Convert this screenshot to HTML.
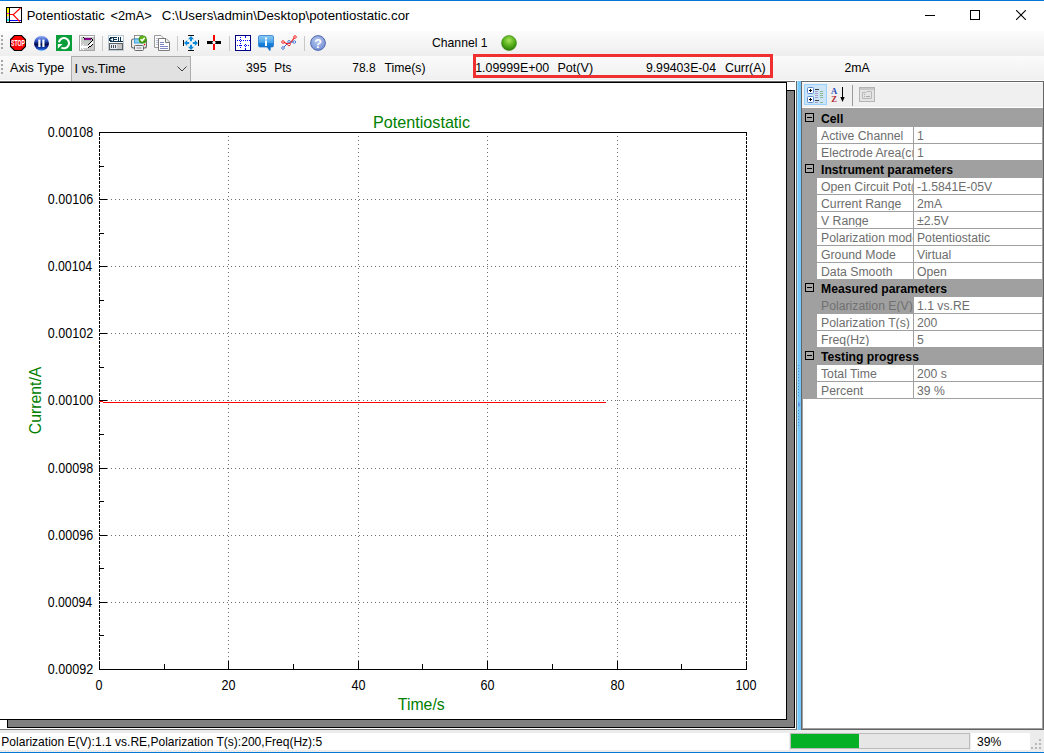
<!DOCTYPE html>
<html><head><meta charset="utf-8">
<style>
*{margin:0;padding:0;box-sizing:border-box}
html,body{width:1044px;height:753px;overflow:hidden;background:#f0f0f0;font-family:"Liberation Sans",sans-serif;font-size:12px;color:#000}
.a{position:absolute}
.t{position:absolute;white-space:nowrap;line-height:1}
</style></head><body>
<!-- window top border -->
<div class="a" style="left:0;top:0;width:1044px;height:1px;background:#0577d4"></div>
<!-- title bar -->
<div class="a" style="left:0;top:1px;width:1044px;height:30px;background:#fff"></div>

<svg class="a" style="left:6px;top:7px" width="16" height="16" viewBox="0 0 16 16" shape-rendering="crispEdges"><rect x="0" y="0" width="16" height="16" fill="#000"/><rect x="4" y="1" width="11" height="14" fill="#fff"/><rect x="1" y="1" width="2" height="5" fill="#ffff00"/><rect x="1" y="6" width="2" height="1" fill="#ff00ff"/><rect x="1" y="7" width="2" height="2" fill="#ffff00"/><rect x="1" y="9" width="2" height="3" fill="#d8d0d0"/><rect x="1" y="12" width="2" height="2" fill="#00ffff"/><rect x="1" y="14" width="2" height="1" fill="#e8e0e0"/><rect x="4" y="13" width="11" height="1" fill="#0000ff"/><g shape-rendering="auto"><path d="M4,7.5 H7.5 L14.5,1 M7,7.5 L13.8,14.6" fill="none" stroke="#ff0000" stroke-width="1.1"/></g></svg>
<div class="a" style="left:925px;top:15px;width:10px;height:1px;background:#000"></div>
<div class="a" style="left:970px;top:10px;width:10px;height:10px;border:1px solid #000"></div>
<svg class="a" style="left:1016px;top:10px" width="10" height="10" viewBox="0 0 10 10"><path d="M0,0 L10,10 M10,0 L0,10" stroke="#000" stroke-width="1.1"/></svg>
<!-- toolbar rows -->
<div class="a" style="left:0;top:31px;width:1044px;height:25px;background:linear-gradient(#fcfcfc,#eeeeee)"></div>
<div class="a" style="left:0;top:56px;width:1044px;height:25px;background:linear-gradient(#fbfbfb,#efefef)"></div>
<div class="a" style="left:0;top:80px;width:1044px;height:1px;background:#fff"></div>
<div class="a" style="left:0;top:81px;width:1044px;height:1px;background:#646464"></div>

<!-- toolbar row 1 -->
<div class="a" style="left:1px;top:35px;width:2px;height:2px;background:#a8a8a8"></div>
<div class="a" style="left:1px;top:39px;width:2px;height:2px;background:#a8a8a8"></div>
<div class="a" style="left:1px;top:43px;width:2px;height:2px;background:#a8a8a8"></div>
<div class="a" style="left:1px;top:47px;width:2px;height:2px;background:#a8a8a8"></div>
<svg class="a" style="left:10px;top:35px" width="16" height="16" viewBox="0 0 16 16"><polygon points="4.5,0.5 11.5,0.5 15.5,4.5 15.5,11.5 11.5,15.5 4.5,15.5 0.5,11.5 0.5,4.5" fill="#ff0000" stroke="#000" stroke-width="1.1"/><text x="8" y="11.2" font-family="Liberation Sans" font-weight="bold" font-size="9" fill="#fff" text-anchor="middle" textLength="14" lengthAdjust="spacingAndGlyphs">STOP</text></svg>
<svg class="a" style="left:34px;top:35px" width="16" height="16" viewBox="0 0 16 16"><defs><linearGradient id="pg" x1="0" y1="0" x2="0" y2="1"><stop offset="0" stop-color="#a0b8f8"/><stop offset="0.3" stop-color="#3458c8"/><stop offset="0.58" stop-color="#000a50"/><stop offset="0.85" stop-color="#1a48c0"/><stop offset="1" stop-color="#48a8f8"/></linearGradient></defs><circle cx="7.5" cy="8.3" r="7.5" fill="url(#pg)"/><rect x="4.3" y="4.5" width="2.2" height="7.5" fill="#fff"/><rect x="8.3" y="4.5" width="2.2" height="7.5" fill="#fff"/></svg>
<svg class="a" style="left:56px;top:35px" width="16" height="16" viewBox="0 0 16 16"><rect width="16" height="16" fill="#0a9e3a"/><path d="M2.9,7.3 A5.1,5.1 0 1 1 5.4,12.6" fill="none" stroke="#fff" stroke-width="2.1"/><polygon points="1.9,9 6.6,9 1.9,13.4" fill="#fff"/></svg>
<svg class="a" style="left:79px;top:35px" width="16" height="16" viewBox="0 0 16 16" shape-rendering="crispEdges"><rect x="0" y="0" width="16" height="16" fill="#a4a4a4"/><rect x="1" y="1" width="14" height="14" fill="#c8c8c8"/><rect x="1" y="1" width="14" height="1" fill="#fff"/><rect x="1" y="1" width="1" height="14" fill="#fff"/><rect x="5" y="3" width="7" height="2" fill="#8b008b"/><rect x="5" y="5" width="7" height="1" fill="#b0c0b0"/><g fill="#000"><rect x="4" y="2" width="1" height="1"/><rect x="5" y="3" width="1" height="1"/><rect x="12" y="3" width="1" height="1"/><rect x="13" y="4" width="1" height="2"/><rect x="12" y="6" width="1" height="1"/><rect x="11" y="7" width="1" height="1"/><rect x="10" y="8" width="1" height="1"/><rect x="9" y="9" width="1" height="1"/><rect x="13" y="9" width="1" height="1"/><rect x="12" y="10" width="1" height="1"/><rect x="10" y="11" width="2" height="1"/><rect x="8" y="12" width="2" height="1"/></g><g fill="#fff"><rect x="13" y="6" width="1" height="3"/><rect x="12" y="7" width="1" height="3"/><rect x="11" y="8" width="1" height="3"/><rect x="10" y="9" width="1" height="2"/><rect x="9" y="10" width="1" height="2"/><rect x="4" y="11" width="5" height="2"/><rect x="3" y="10" width="1" height="4"/><rect x="2" y="11" width="1" height="2"/><rect x="4" y="9" width="1" height="1"/><rect x="4" y="14" width="1" height="1"/></g></svg>
<div class="a" style="left:102px;top:36px;width:1px;height:15px;background:#c8c8c8"></div>
<svg class="a" style="left:108px;top:35px" width="16" height="16" viewBox="0 0 16 16" shape-rendering="crispEdges"><rect x="0" y="0" width="16" height="16" fill="#bccbd8"/><rect x="1" y="1" width="14" height="14" fill="#fcfdfe"/><g fill="#0c3252"><rect x="2" y="2" width="13" height="5"/><rect x="1" y="3" width="1" height="3"/></g><g fill="#fcfdfe"><polygon points="2.2,4.5 5,2.8 5,6.2" shape-rendering="auto"/><rect x="6" y="3" width="3" height="1"/><rect x="6" y="5" width="3" height="1"/><rect x="9" y="2" width="1" height="4"/><rect x="11" y="2" width="1" height="4"/><rect x="13" y="2" width="2" height="4"/></g><rect x="1" y="8" width="14" height="7" fill="#606060"/><rect x="2" y="9" width="7" height="5" fill="#e4ecf8"/><rect x="9" y="9" width="5" height="5" fill="#c4c4c4"/><g fill="#505050"><rect x="3" y="10" width="1" height="3"/><rect x="5" y="10" width="1" height="3"/><rect x="7" y="10" width="1" height="3"/></g></svg>
<svg class="a" style="left:131px;top:35px" width="16" height="16" viewBox="0 0 16 16"><rect x="3.5" y="0.5" width="8" height="5" fill="#fff" stroke="#8a8a8a" stroke-width="0.9"/><rect x="0.5" y="4" width="15" height="9" rx="2" fill="#f0f0f0" stroke="#6a6a6a" stroke-width="1.1"/><rect x="3" y="3.5" width="9" height="5" fill="#3fa0dc"/><rect x="4" y="4.5" width="6" height="3" fill="#8cd0f4"/><rect x="3.5" y="10.5" width="9" height="5" rx="1" fill="#eef0f8" stroke="#6a6a6a"/><rect x="5.5" y="12.5" width="5" height="1" fill="#8a8a8a"/><circle cx="11.7" cy="4.4" r="4" fill="#3f9a10"/><circle cx="11.7" cy="3.6" r="2.6" fill="#7cc820" opacity="0.6"/><path d="M9.6,4.3 L11.1,5.8 L13.8,2.8" fill="none" stroke="#fff" stroke-width="1.5"/><circle cx="13.6" cy="9.6" r="0.8" fill="#e00000"/></svg>
<svg class="a" style="left:154px;top:35px" width="16" height="16" viewBox="0 0 16 16"><path d="M0.5,0.5 H7 L9.5,3 V12.5 H0.5 Z" fill="#fafafa" stroke="#9a9a9a"/><path d="M4.5,3.5 H12 L15.5,7 V15.5 H4.5 Z" fill="#fff" stroke="#7a7a7a"/><path d="M11.5,3.5 V7.5 H15.5" fill="#f0f0f0" stroke="#7a7a7a"/><g fill="#8088c4"><rect x="6" y="7" width="4" height="1"/><rect x="6" y="9" width="4" height="1"/><rect x="6" y="11" width="8" height="1"/><rect x="6" y="13" width="8" height="1"/></g><g fill="#b8c0e0"><rect x="2" y="3" width="2" height="1"/><rect x="2" y="5" width="2" height="1"/><rect x="2" y="7" width="2" height="1"/><rect x="2" y="9" width="2" height="1"/></g></svg>
<div class="a" style="left:177px;top:36px;width:1px;height:15px;background:#c8c8c8"></div>
<svg class="a" style="left:183px;top:35px" width="16" height="16" viewBox="0 0 16 16" shape-rendering="crispEdges"><g fill="#111"><rect x="5" y="0" width="6" height="1"/><rect x="5" y="15" width="6" height="1"/><rect x="0" y="5" width="1" height="6"/><rect x="15" y="5" width="1" height="6"/></g><g fill="#0a8ad8" shape-rendering="auto"><polygon points="8,1 11,4.2 9,4.2 9,6.2 7,6.2 7,4.2 5,4.2"/><polygon points="8,15 11,11.8 9,11.8 9,9.8 7,9.8 7,11.8 5,11.8"/><polygon points="1,8 4.2,5 4.2,7 6.2,7 6.2,9 4.2,9 4.2,11"/><polygon points="15,8 11.8,5 11.8,7 9.8,7 9.8,9 11.8,9 11.8,11"/></g></svg>
<svg class="a" style="left:206px;top:35px" width="16" height="16" viewBox="0 0 16 16" shape-rendering="crispEdges"><rect x="1" y="6" width="14" height="3" fill="#000"/><rect x="7" y="0" width="2" height="15" fill="#ff0000"/><circle cx="8" cy="7.5" r="1.6" fill="#fff" shape-rendering="auto"/></svg>
<div class="a" style="left:229px;top:36px;width:1px;height:15px;background:#c8c8c8"></div>
<svg class="a" style="left:235px;top:35px" width="16" height="16" viewBox="0 0 16 16" shape-rendering="crispEdges"><rect x="0" y="0" width="16" height="16" fill="#000080"/><rect x="1" y="1" width="14" height="14" fill="#fff"/><g fill="#0000ff"><rect x="5" y="2" width="1" height="1"/><rect x="5" y="8" width="1" height="1"/><rect x="5" y="10" width="1" height="1"/><rect x="5" y="12" width="1" height="1"/><rect x="10" y="1" width="1" height="2"/><rect x="10" y="5" width="1" height="1"/><rect x="10" y="13" width="1" height="2"/><rect x="2" y="5" width="1" height="1"/><rect x="8" y="5" width="1" height="1"/><rect x="12" y="5" width="1" height="1"/><rect x="14" y="5" width="1" height="1"/><rect x="2" y="10" width="1" height="1"/><rect x="4" y="10" width="1" height="1"/><rect x="6" y="10" width="1" height="1"/><rect x="13" y="10" width="1" height="1"/><rect x="5" y="4" width="1" height="1"/><rect x="4" y="5" width="1" height="1"/><rect x="6" y="5" width="1" height="1"/><rect x="5" y="6" width="1" height="1"/><rect x="10" y="9" width="1" height="1"/><rect x="9" y="10" width="1" height="1"/><rect x="11" y="10" width="1" height="1"/><rect x="10" y="11" width="1" height="1"/></g></svg>
<svg class="a" style="left:258px;top:35px" width="16" height="16" viewBox="0 0 16 16"><defs><linearGradient id="ig" x1="0" y1="0" x2="0" y2="1"><stop offset="0" stop-color="#8ccaf4"/><stop offset="0.45" stop-color="#4aa4ea"/><stop offset="0.5" stop-color="#1a84dc"/><stop offset="1" stop-color="#0860c0"/></linearGradient></defs><path d="M2,0.5 H14 Q15.5,0.5 15.5,2 V10.5 Q15.5,12 14,12 H12.5 L12,15.8 L9,12 H2 Q0.5,12 0.5,10.5 V2 Q0.5,0.5 2,0.5 Z" fill="url(#ig)" stroke="#1a70c8" stroke-width="0.7"/><rect x="7" y="2.5" width="2" height="2" fill="#fff"/><rect x="7" y="5.5" width="2" height="5.5" fill="#fff"/></svg>
<svg class="a" style="left:281px;top:35px" width="17" height="16" viewBox="0 0 17 16"><path d="M2,13 L8,7 L13,7" fill="none" stroke="#3a6ad0" stroke-width="1"/><path d="M2,7 L8,9.5 L14,2" fill="none" stroke="#f01818" stroke-width="1.2"/><g fill="#fff" stroke-width="0.9"><circle cx="2" cy="13" r="1.3" stroke="#3a6ad0"/><circle cx="8" cy="6.8" r="1.3" stroke="#3a6ad0"/><circle cx="13.3" cy="7" r="1.3" stroke="#3a6ad0"/><circle cx="2" cy="7" r="1.3" stroke="#f01818"/><circle cx="8" cy="9.5" r="1.3" stroke="#f01818"/><circle cx="14" cy="2" r="1.3" stroke="#f01818"/></g></svg>
<div class="a" style="left:304px;top:36px;width:1px;height:15px;background:#c8c8c8"></div>
<svg class="a" style="left:310px;top:35px" width="16" height="16" viewBox="0 0 16 16"><defs><radialGradient id="hg" cx="0.45" cy="0.35" r="0.75"><stop offset="0" stop-color="#b8c8f0"/><stop offset="1" stop-color="#6a88d0"/></radialGradient></defs><circle cx="8" cy="8" r="7.4" fill="url(#hg)" stroke="#4860a8" stroke-width="0.9"/><text x="8" y="12.8" font-family="Liberation Sans" font-weight="bold" font-size="12.5" fill="#fff" text-anchor="middle">?</text></svg>
<svg class="a" style="left:501px;top:35px" width="16" height="16" viewBox="0 0 16 16"><defs><radialGradient id="gg" cx="0.5" cy="0.32" r="0.7"><stop offset="0" stop-color="#a6e458"/><stop offset="0.6" stop-color="#4ea816"/><stop offset="1" stop-color="#2c760a"/></radialGradient></defs><circle cx="8" cy="8" r="7.5" fill="url(#gg)" stroke="#3a8a12" stroke-width="0.6"/></svg>

<!-- toolbar row 2 -->
<div class="a" style="left:1px;top:60px;width:2px;height:2px;background:#a8a8a8"></div>
<div class="a" style="left:1px;top:64px;width:2px;height:2px;background:#a8a8a8"></div>
<div class="a" style="left:1px;top:68px;width:2px;height:2px;background:#a8a8a8"></div>
<div class="a" style="left:1px;top:72px;width:2px;height:2px;background:#a8a8a8"></div>
<div class="a" style="left:71px;top:56px;width:120px;height:25px;background:#e1e1e1;border:1px solid #adadad;border-bottom:none"></div>
<svg class="a" style="left:177px;top:66px" width="10" height="6" viewBox="0 0 10 6"><path d="M0.5,0.5 L5,5 L9.5,0.5" fill="none" stroke="#404040" stroke-width="1"/></svg>
<div class="a" style="left:473px;top:54px;width:300px;height:24px;border:3px solid #f03030"></div>

<!-- status bar -->
<div class="a" style="left:0;top:730px;width:1044px;height:22px;background:#ececec"></div>
<div class="a" style="left:0;top:729px;width:1044px;height:1px;background:#7a7a7a"></div>
<div class="a" style="left:0;top:752px;width:1044px;height:1px;background:#0577d4"></div>
<div class="a" style="left:0;top:733px;width:789px;height:17px;background:#fff"></div>
<div class="a" style="left:790px;top:733px;width:180px;height:16px;background:#e6e6e6;border:1px solid #bcbcbc"></div>
<div class="a" style="left:791px;top:734px;width:68px;height:14px;background:#06b025"></div>
<div class="a" style="left:971px;top:733px;width:59px;height:17px;background:#fff"></div>
<div class="a" style="left:1039px;top:739px;width:2px;height:2px;background:#b8b8b8"></div>
<div class="a" style="left:1035px;top:743px;width:2px;height:2px;background:#b8b8b8"></div>
<div class="a" style="left:1039px;top:743px;width:2px;height:2px;background:#b8b8b8"></div>
<div class="a" style="left:1031px;top:747px;width:2px;height:2px;background:#b8b8b8"></div>
<div class="a" style="left:1035px;top:747px;width:2px;height:2px;background:#b8b8b8"></div>
<div class="a" style="left:1039px;top:747px;width:2px;height:2px;background:#b8b8b8"></div>


<div class="a" style="left:0;top:82px;width:796px;height:647px;background:#fff"></div>
<!-- plot panel shadow -->
<div class="a" style="left:7px;top:90px;width:788px;height:638px;background:#808080;border:1px solid #000"></div>
<!-- plot panel -->
<div class="a" style="left:0;top:82px;width:787px;height:638px;background:#fff;border:1px solid #000;border-left:none"></div>

<!-- plot -->
<svg class="a" style="left:0;top:0" width="1044" height="753" shape-rendering="crispEdges">
<line x1="228.5" y1="132" x2="228.5" y2="669" stroke="#6e6e6e" stroke-dasharray="1 3"/>
<line x1="358.5" y1="132" x2="358.5" y2="669" stroke="#6e6e6e" stroke-dasharray="1 3"/>
<line x1="487.5" y1="132" x2="487.5" y2="669" stroke="#6e6e6e" stroke-dasharray="1 3"/>
<line x1="617.5" y1="132" x2="617.5" y2="669" stroke="#6e6e6e" stroke-dasharray="1 3"/>
<line x1="99" y1="199.5" x2="746" y2="199.5" stroke="#6e6e6e" stroke-dasharray="1 3"/>
<line x1="99" y1="266.5" x2="746" y2="266.5" stroke="#6e6e6e" stroke-dasharray="1 3"/>
<line x1="99" y1="333.5" x2="746" y2="333.5" stroke="#6e6e6e" stroke-dasharray="1 3"/>
<line x1="99" y1="400.5" x2="746" y2="400.5" stroke="#6e6e6e" stroke-dasharray="1 3"/>
<line x1="99" y1="468.5" x2="746" y2="468.5" stroke="#6e6e6e" stroke-dasharray="1 3"/>
<line x1="99" y1="535.5" x2="746" y2="535.5" stroke="#6e6e6e" stroke-dasharray="1 3"/>
<line x1="99" y1="602.5" x2="746" y2="602.5" stroke="#6e6e6e" stroke-dasharray="1 3"/>
<rect x="99" y="132" width="648" height="1" fill="#000"/>
<rect x="99" y="669" width="648" height="1" fill="#000"/>
<line x1="99.5" y1="133" x2="99.5" y2="669" stroke="#000" stroke-dasharray="3 1"/>
<line x1="746.5" y1="133" x2="746.5" y2="669" stroke="#000" stroke-dasharray="3 1"/>
<rect x="99" y="199" width="8" height="1" fill="#000"/>
<rect x="99" y="266" width="8" height="1" fill="#000"/>
<rect x="99" y="333" width="8" height="1" fill="#000"/>
<rect x="99" y="400" width="8" height="1" fill="#000"/>
<rect x="99" y="468" width="8" height="1" fill="#000"/>
<rect x="99" y="535" width="8" height="1" fill="#000"/>
<rect x="99" y="602" width="8" height="1" fill="#000"/>
<rect x="99" y="166" width="5" height="1" fill="#000"/>
<rect x="99" y="233" width="5" height="1" fill="#000"/>
<rect x="99" y="300" width="5" height="1" fill="#000"/>
<rect x="99" y="367" width="5" height="1" fill="#000"/>
<rect x="99" y="434" width="5" height="1" fill="#000"/>
<rect x="99" y="501" width="5" height="1" fill="#000"/>
<rect x="99" y="568" width="5" height="1" fill="#000"/>
<rect x="99" y="635" width="5" height="1" fill="#000"/>
<rect x="228" y="661" width="1" height="8" fill="#000"/>
<rect x="358" y="661" width="1" height="8" fill="#000"/>
<rect x="487" y="661" width="1" height="8" fill="#000"/>
<rect x="617" y="661" width="1" height="8" fill="#000"/>
<rect x="164" y="664" width="1" height="5" fill="#000"/>
<rect x="293" y="664" width="1" height="5" fill="#000"/>
<rect x="422" y="664" width="1" height="5" fill="#000"/>
<rect x="552" y="664" width="1" height="5" fill="#000"/>
<rect x="681" y="664" width="1" height="5" fill="#000"/>
<rect x="99" y="401" width="4" height="1" fill="#ff0000"/><rect x="103" y="402" width="503" height="1" fill="#ff0000"/>
<rect x="99" y="661" width="1" height="9" fill="#000"/><rect x="746" y="661" width="1" height="9" fill="#000"/>
</svg>
<!-- splitter -->
<div class="a" style="left:795px;top:81px;width:1px;height:648px;background:#fff"></div>
<div class="a" style="left:796px;top:81px;width:1px;height:648px;background:#6a6a6a"></div>
<div class="a" style="left:797px;top:81px;width:4px;height:649px;background:linear-gradient(90deg,#a2e2ff 0,#a2e2ff 1px,#78cbff 1px,#74c8ff 4px)"></div>
<svg class="a" style="left:797px;top:360px" width="4" height="70" shape-rendering="crispEdges"><g fill="#4f86dc"><rect x="1" y="5" width="1" height="1"/><rect x="1" y="8" width="1" height="1"/><rect x="1" y="11" width="1" height="1"/><rect x="1" y="14" width="1" height="1"/><rect x="1" y="17" width="1" height="1"/><rect x="1" y="20" width="1" height="1"/><rect x="1" y="23" width="1" height="1"/><rect x="1" y="26" width="1" height="1"/><rect x="1" y="29" width="1" height="1"/><rect x="1" y="32" width="1" height="1"/><rect x="1" y="35" width="1" height="1"/><rect x="1" y="50" width="1" height="1"/><rect x="1" y="53" width="1" height="1"/><rect x="1" y="56" width="1" height="1"/><rect x="1" y="59" width="1" height="1"/><rect x="1" y="62" width="1" height="1"/><rect x="1" y="65" width="1" height="1"/></g><polygon points="1,41.5 3.5,44.5 1,47.5" fill="#5a8ee6" shape-rendering="auto"/></svg>

<!-- property grid -->
<div class="a" style="left:801px;top:81px;width:243px;height:649px;background:#fff;border:1px solid #646464"></div>
<div class="a" style="left:802px;top:83px;width:241px;height:24px;background:#f0f0f0"></div>
<div class="a" style="left:804px;top:84px;width:23px;height:21px;background:#cce4f7;border:1px solid #99d1ff"></div>
<svg class="a" style="left:806px;top:86px" width="20" height="18" viewBox="0 0 20 18" shape-rendering="crispEdges"><rect x="1.5" y="1.5" width="6" height="6" rx="1" fill="#fff" stroke="#5a8ad0" shape-rendering="auto"/><rect x="1.5" y="10.5" width="6" height="6" rx="1" fill="#fff" stroke="#5a8ad0" shape-rendering="auto"/><g fill="#000"><rect x="4" y="3" width="1" height="3"/><rect x="3" y="4" width="3" height="1"/><rect x="4" y="12" width="1" height="3"/><rect x="3" y="13" width="3" height="1"/></g><g fill="#404040"><rect x="9" y="3" width="4" height="1"/><rect x="9" y="14" width="4" height="1"/></g><g fill="#a8a0c8"><rect x="9" y="5" width="3" height="1"/><rect x="9" y="7" width="3" height="1"/><rect x="9" y="9" width="3" height="1"/><rect x="9" y="11" width="3" height="1"/><rect x="9" y="16" width="3" height="1"/></g><g fill="#90b890"><rect x="14" y="5" width="3" height="1"/><rect x="14" y="7" width="3" height="1"/><rect x="14" y="9" width="3" height="1"/><rect x="14" y="11" width="3" height="1"/><rect x="14" y="16" width="3" height="1"/></g></svg>
<svg class="a" style="left:830px;top:86px" width="16" height="18" viewBox="0 0 16 18"><text x="4" y="7.6" font-family="Liberation Serif" font-weight="bold" font-size="8.6" fill="#2848b8" text-anchor="middle">A</text><text x="4" y="15.8" font-family="Liberation Serif" font-weight="bold" font-size="8.6" fill="#b02830" text-anchor="middle">Z</text><path d="M12.5,1 V13" stroke="#000" stroke-width="1"/><path d="M10.3,11 L12.5,16 L14.7,11 Z" fill="#000"/></svg>
<div class="a" style="left:852px;top:85px;width:1px;height:21px;background:#9a9a9a"></div>
<svg class="a" style="left:859px;top:87px" width="16" height="15" viewBox="0 0 16 15"><rect x="0.5" y="0.5" width="15" height="14" fill="#e4e4e4" stroke="#b4b4b4"/><rect x="1" y="1" width="14" height="2" fill="#c8c8c8"/><path d="M3.5,5.5 H7 L8,4.5 H12.5 V11.5 H3.5 Z" fill="none" stroke="#b8b8b8"/><rect x="5" y="7" width="1" height="1" fill="#aaa"/><rect x="5" y="9" width="1" height="1" fill="#aaa"/><rect x="7" y="9" width="4" height="1" fill="#aaa"/></svg>
<div class="a" style="left:802px;top:108px;width:241px;height:19px;background:#a0a0a0"></div>
<div class="a" style="left:805px;top:113px;width:9px;height:9px;border:1px solid #000;background:#a8a8a8"></div><div class="a" style="left:807px;top:117px;width:5px;height:1px;background:#000"></div>
<div class="t" style="left:821px;top:113px;font-size:12px;font-weight:bold;transform:scaleX(1.015);transform-origin:0 0">Cell</div>
<div class="a" style="left:802px;top:127px;width:241px;height:17px;background:#a0a0a0"></div>
<div class="a" style="left:817px;top:127px;width:96px;height:16px;background:#fff"></div>
<div class="a" style="left:914px;top:127px;width:129px;height:16px;background:#fff"></div>
<div class="t" style="left:821px;top:130px;width:90.2px;overflow:hidden;transform:scaleX(1.02);transform-origin:0 0;font-size:12px;color:#6d6d6d">Active Channel</div>
<div class="t" style="left:917px;top:130px;font-size:12px;color:#6d6d6d;transform:scaleX(1.015);transform-origin:0 0">1</div>
<div class="a" style="left:802px;top:144px;width:241px;height:17px;background:#a0a0a0"></div>
<div class="a" style="left:817px;top:144px;width:96px;height:16px;background:#fff"></div>
<div class="a" style="left:914px;top:144px;width:129px;height:16px;background:#fff"></div>
<div class="t" style="left:821px;top:147px;width:90.2px;overflow:hidden;transform:scaleX(1.02);transform-origin:0 0;font-size:12px;color:#6d6d6d">Electrode Area(cm²)</div>
<div class="t" style="left:917px;top:147px;font-size:12px;color:#6d6d6d;transform:scaleX(1.015);transform-origin:0 0">1</div>
<div class="a" style="left:802px;top:161px;width:241px;height:17px;background:#a0a0a0"></div>
<div class="a" style="left:805px;top:164px;width:9px;height:9px;border:1px solid #000;background:#a8a8a8"></div><div class="a" style="left:807px;top:168px;width:5px;height:1px;background:#000"></div>
<div class="t" style="left:821px;top:164px;font-size:12px;font-weight:bold;transform:scaleX(1.015);transform-origin:0 0">Instrument parameters</div>
<div class="a" style="left:802px;top:178px;width:241px;height:17px;background:#a0a0a0"></div>
<div class="a" style="left:817px;top:178px;width:96px;height:16px;background:#fff"></div>
<div class="a" style="left:914px;top:178px;width:129px;height:16px;background:#fff"></div>
<div class="t" style="left:821px;top:181px;width:90.2px;overflow:hidden;transform:scaleX(1.02);transform-origin:0 0;font-size:12px;color:#6d6d6d">Open Circuit Pot(V)</div>
<div class="t" style="left:917px;top:181px;font-size:12px;color:#6d6d6d;transform:scaleX(1.015);transform-origin:0 0">-1.5841E-05V</div>
<div class="a" style="left:802px;top:195px;width:241px;height:17px;background:#a0a0a0"></div>
<div class="a" style="left:817px;top:195px;width:96px;height:16px;background:#fff"></div>
<div class="a" style="left:914px;top:195px;width:129px;height:16px;background:#fff"></div>
<div class="t" style="left:821px;top:198px;width:90.2px;overflow:hidden;transform:scaleX(1.02);transform-origin:0 0;font-size:12px;color:#6d6d6d">Current Range</div>
<div class="t" style="left:917px;top:198px;font-size:12px;color:#6d6d6d;transform:scaleX(1.015);transform-origin:0 0">2mA</div>
<div class="a" style="left:802px;top:212px;width:241px;height:17px;background:#a0a0a0"></div>
<div class="a" style="left:817px;top:212px;width:96px;height:16px;background:#fff"></div>
<div class="a" style="left:914px;top:212px;width:129px;height:16px;background:#fff"></div>
<div class="t" style="left:821px;top:215px;width:90.2px;overflow:hidden;transform:scaleX(1.02);transform-origin:0 0;font-size:12px;color:#6d6d6d">V Range</div>
<div class="t" style="left:917px;top:215px;font-size:12px;color:#6d6d6d;transform:scaleX(1.015);transform-origin:0 0">±2.5V</div>
<div class="a" style="left:802px;top:229px;width:241px;height:17px;background:#a0a0a0"></div>
<div class="a" style="left:817px;top:229px;width:96px;height:16px;background:#fff"></div>
<div class="a" style="left:914px;top:229px;width:129px;height:16px;background:#fff"></div>
<div class="t" style="left:821px;top:232px;width:90.2px;overflow:hidden;transform:scaleX(1.02);transform-origin:0 0;font-size:12px;color:#6d6d6d">Polarization mode</div>
<div class="t" style="left:917px;top:232px;font-size:12px;color:#6d6d6d;transform:scaleX(1.015);transform-origin:0 0">Potentiostatic</div>
<div class="a" style="left:802px;top:246px;width:241px;height:17px;background:#a0a0a0"></div>
<div class="a" style="left:817px;top:246px;width:96px;height:16px;background:#fff"></div>
<div class="a" style="left:914px;top:246px;width:129px;height:16px;background:#fff"></div>
<div class="t" style="left:821px;top:249px;width:90.2px;overflow:hidden;transform:scaleX(1.02);transform-origin:0 0;font-size:12px;color:#6d6d6d">Ground Mode</div>
<div class="t" style="left:917px;top:249px;font-size:12px;color:#6d6d6d;transform:scaleX(1.015);transform-origin:0 0">Virtual</div>
<div class="a" style="left:802px;top:263px;width:241px;height:17px;background:#a0a0a0"></div>
<div class="a" style="left:817px;top:263px;width:96px;height:16px;background:#fff"></div>
<div class="a" style="left:914px;top:263px;width:129px;height:16px;background:#fff"></div>
<div class="t" style="left:821px;top:266px;width:90.2px;overflow:hidden;transform:scaleX(1.02);transform-origin:0 0;font-size:12px;color:#6d6d6d">Data Smooth</div>
<div class="t" style="left:917px;top:266px;font-size:12px;color:#6d6d6d;transform:scaleX(1.015);transform-origin:0 0">Open</div>
<div class="a" style="left:802px;top:280px;width:241px;height:17px;background:#a0a0a0"></div>
<div class="a" style="left:805px;top:283px;width:9px;height:9px;border:1px solid #000;background:#a8a8a8"></div><div class="a" style="left:807px;top:287px;width:5px;height:1px;background:#000"></div>
<div class="t" style="left:821px;top:283px;font-size:12px;font-weight:bold;transform:scaleX(1.015);transform-origin:0 0">Measured parameters</div>
<div class="a" style="left:802px;top:297px;width:241px;height:17px;background:#a0a0a0"></div>
<div class="a" style="left:914px;top:297px;width:129px;height:16px;background:#fff"></div>
<div class="t" style="left:821px;top:300px;width:90.2px;overflow:hidden;transform:scaleX(1.02);transform-origin:0 0;font-size:12px;color:#707070">Polarization E(V)</div>
<div class="t" style="left:917px;top:300px;font-size:12px;color:#6d6d6d;transform:scaleX(1.015);transform-origin:0 0">1.1 vs.RE</div>
<div class="a" style="left:802px;top:314px;width:241px;height:17px;background:#a0a0a0"></div>
<div class="a" style="left:817px;top:314px;width:96px;height:16px;background:#fff"></div>
<div class="a" style="left:914px;top:314px;width:129px;height:16px;background:#fff"></div>
<div class="t" style="left:821px;top:317px;width:90.2px;overflow:hidden;transform:scaleX(1.02);transform-origin:0 0;font-size:12px;color:#6d6d6d">Polarization T(s)</div>
<div class="t" style="left:917px;top:317px;font-size:12px;color:#6d6d6d;transform:scaleX(1.015);transform-origin:0 0">200</div>
<div class="a" style="left:802px;top:331px;width:241px;height:17px;background:#a0a0a0"></div>
<div class="a" style="left:817px;top:331px;width:96px;height:16px;background:#fff"></div>
<div class="a" style="left:914px;top:331px;width:129px;height:16px;background:#fff"></div>
<div class="t" style="left:821px;top:334px;width:90.2px;overflow:hidden;transform:scaleX(1.02);transform-origin:0 0;font-size:12px;color:#6d6d6d">Freq(Hz)</div>
<div class="t" style="left:917px;top:334px;font-size:12px;color:#6d6d6d;transform:scaleX(1.015);transform-origin:0 0">5</div>
<div class="a" style="left:802px;top:348px;width:241px;height:17px;background:#a0a0a0"></div>
<div class="a" style="left:805px;top:351px;width:9px;height:9px;border:1px solid #000;background:#a8a8a8"></div><div class="a" style="left:807px;top:355px;width:5px;height:1px;background:#000"></div>
<div class="t" style="left:821px;top:351px;font-size:12px;font-weight:bold;transform:scaleX(1.015);transform-origin:0 0">Testing progress</div>
<div class="a" style="left:802px;top:365px;width:241px;height:17px;background:#a0a0a0"></div>
<div class="a" style="left:817px;top:365px;width:96px;height:16px;background:#fff"></div>
<div class="a" style="left:914px;top:365px;width:129px;height:16px;background:#fff"></div>
<div class="t" style="left:821px;top:368px;width:90.2px;overflow:hidden;transform:scaleX(1.02);transform-origin:0 0;font-size:12px;color:#6d6d6d">Total Time</div>
<div class="t" style="left:917px;top:368px;font-size:12px;color:#6d6d6d;transform:scaleX(1.015);transform-origin:0 0">200 s</div>
<div class="a" style="left:802px;top:382px;width:241px;height:17px;background:#a0a0a0"></div>
<div class="a" style="left:817px;top:382px;width:96px;height:16px;background:#fff"></div>
<div class="a" style="left:914px;top:382px;width:129px;height:16px;background:#fff"></div>
<div class="t" style="left:821px;top:385px;width:90.2px;overflow:hidden;transform:scaleX(1.02);transform-origin:0 0;font-size:12px;color:#6d6d6d">Percent</div>
<div class="t" style="left:917px;top:385px;font-size:12px;color:#6d6d6d;transform:scaleX(1.015);transform-origin:0 0">39 %</div>
<div class="a" style="left:802px;top:108px;width:1px;height:621px;background:#a0a0a0"></div>
<div class="a" style="left:1042px;top:108px;width:1px;height:621px;background:#a0a0a0"></div>
<div class="a" style="left:802px;top:728px;width:241px;height:1px;background:#a0a0a0"></div>
<svg class="a" style="left:0;top:0" width="1044" height="753" font-family="Liberation Sans">
<text transform="translate(26.66,20) scale(1.0405,1)" font-size="12.5" font-weight="normal" fill="#000">Potentiostatic</text>
<text transform="translate(110.40,20) scale(1.0275,1)" font-size="12.5" font-weight="normal" fill="#000">&lt;2mA&gt;</text>
<text transform="translate(161.80,20) scale(1.0628,1)" font-size="12.5" font-weight="normal" fill="#000">C:\Users\admin\Desktop\potentiostatic.cor</text>
<text transform="translate(432.00,47) scale(0.9390,1)" font-size="13" font-weight="normal" fill="#000">Channel 1</text>
<text transform="translate(10.00,72) scale(1.0074,1)" font-size="12.5" font-weight="normal" fill="#000">Axis Type</text>
<text transform="translate(74.58,73) scale(1.0163,1)" font-size="12.5" font-weight="normal" fill="#000">I vs.Time</text>
<text transform="translate(246.00,72) scale(0.9810,1)" font-size="12.5" font-weight="normal" fill="#000">395</text>
<text transform="translate(274.35,72) scale(0.9471,1)" font-size="12.5" font-weight="normal" fill="#000">Pts</text>
<text transform="translate(352.30,72) scale(0.9583,1)" font-size="12.5" font-weight="normal" fill="#000">78.8</text>
<text transform="translate(384.50,72) scale(0.9786,1)" font-size="12.5" font-weight="normal" fill="#000">Time(s)</text>
<text transform="translate(475.21,72) scale(0.9905,1)" font-size="12.5" font-weight="normal" fill="#000">1.09999E+00</text>
<text transform="translate(557.49,72) scale(1.0059,1)" font-size="12.5" font-weight="normal" fill="#000">Pot(V)</text>
<text transform="translate(645.90,72) scale(0.9806,1)" font-size="12.5" font-weight="normal" fill="#000">9.99403E-04</text>
<text transform="translate(725.00,72) scale(0.9927,1)" font-size="12.5" font-weight="normal" fill="#000">Curr(A)</text>
<text transform="translate(844.40,72) scale(0.9846,1)" font-size="12.5" font-weight="normal" fill="#000">2mA</text>
<text transform="translate(1.30,746) scale(1.0034,1)" font-size="12" font-weight="normal" fill="#000">Polarization E(V):1.1 vs.RE,Polarization T(s):200,Freq(Hz):5</text>
<text transform="translate(977.10,746) scale(0.9720,1)" font-size="12.5" font-weight="normal" fill="#000">39%</text>
<text transform="translate(47.80,137) scale(0.8960,1)" font-size="14" font-weight="normal" fill="#000">0.00108</text>
<text transform="translate(47.80,204) scale(0.8960,1)" font-size="14" font-weight="normal" fill="#000">0.00106</text>
<text transform="translate(47.80,271) scale(0.8784,1)" font-size="14" font-weight="normal" fill="#000">0.00104</text>
<text transform="translate(47.80,338) scale(0.8960,1)" font-size="14" font-weight="normal" fill="#000">0.00102</text>
<text transform="translate(47.80,405) scale(0.8960,1)" font-size="14" font-weight="normal" fill="#000">0.00100</text>
<text transform="translate(47.80,473) scale(0.8960,1)" font-size="14" font-weight="normal" fill="#000">0.00098</text>
<text transform="translate(47.80,540) scale(0.8960,1)" font-size="14" font-weight="normal" fill="#000">0.00096</text>
<text transform="translate(47.80,607) scale(0.8784,1)" font-size="14" font-weight="normal" fill="#000">0.00094</text>
<text transform="translate(47.80,674) scale(0.8960,1)" font-size="14" font-weight="normal" fill="#000">0.00092</text>
<text transform="translate(95.60,690) scale(0.9,1)" font-size="14" fill="#000">0</text>
<text transform="translate(221.45,690) scale(0.9,1)" font-size="14" fill="#000">20</text>
<text transform="translate(351.45,690) scale(0.9,1)" font-size="14" fill="#000">40</text>
<text transform="translate(480.45,690) scale(0.9,1)" font-size="14" fill="#000">60</text>
<text transform="translate(610.45,690) scale(0.9,1)" font-size="14" fill="#000">80</text>
<text transform="translate(735.40,690) scale(0.9,1)" font-size="14" fill="#000">100</text>
<text transform="translate(373.05,128) scale(0.9505,1)" font-size="17" font-weight="normal" fill="#008000">Potentiostatic</text>
<text transform="translate(397.80,710) scale(0.9320,1)" font-size="17" font-weight="normal" fill="#008000">Time/s</text>
<text transform="translate(41,434.13) rotate(-90) scale(0.9278,1)" font-size="17" fill="#008000">Current/A</text>
</svg>
</body></html>
